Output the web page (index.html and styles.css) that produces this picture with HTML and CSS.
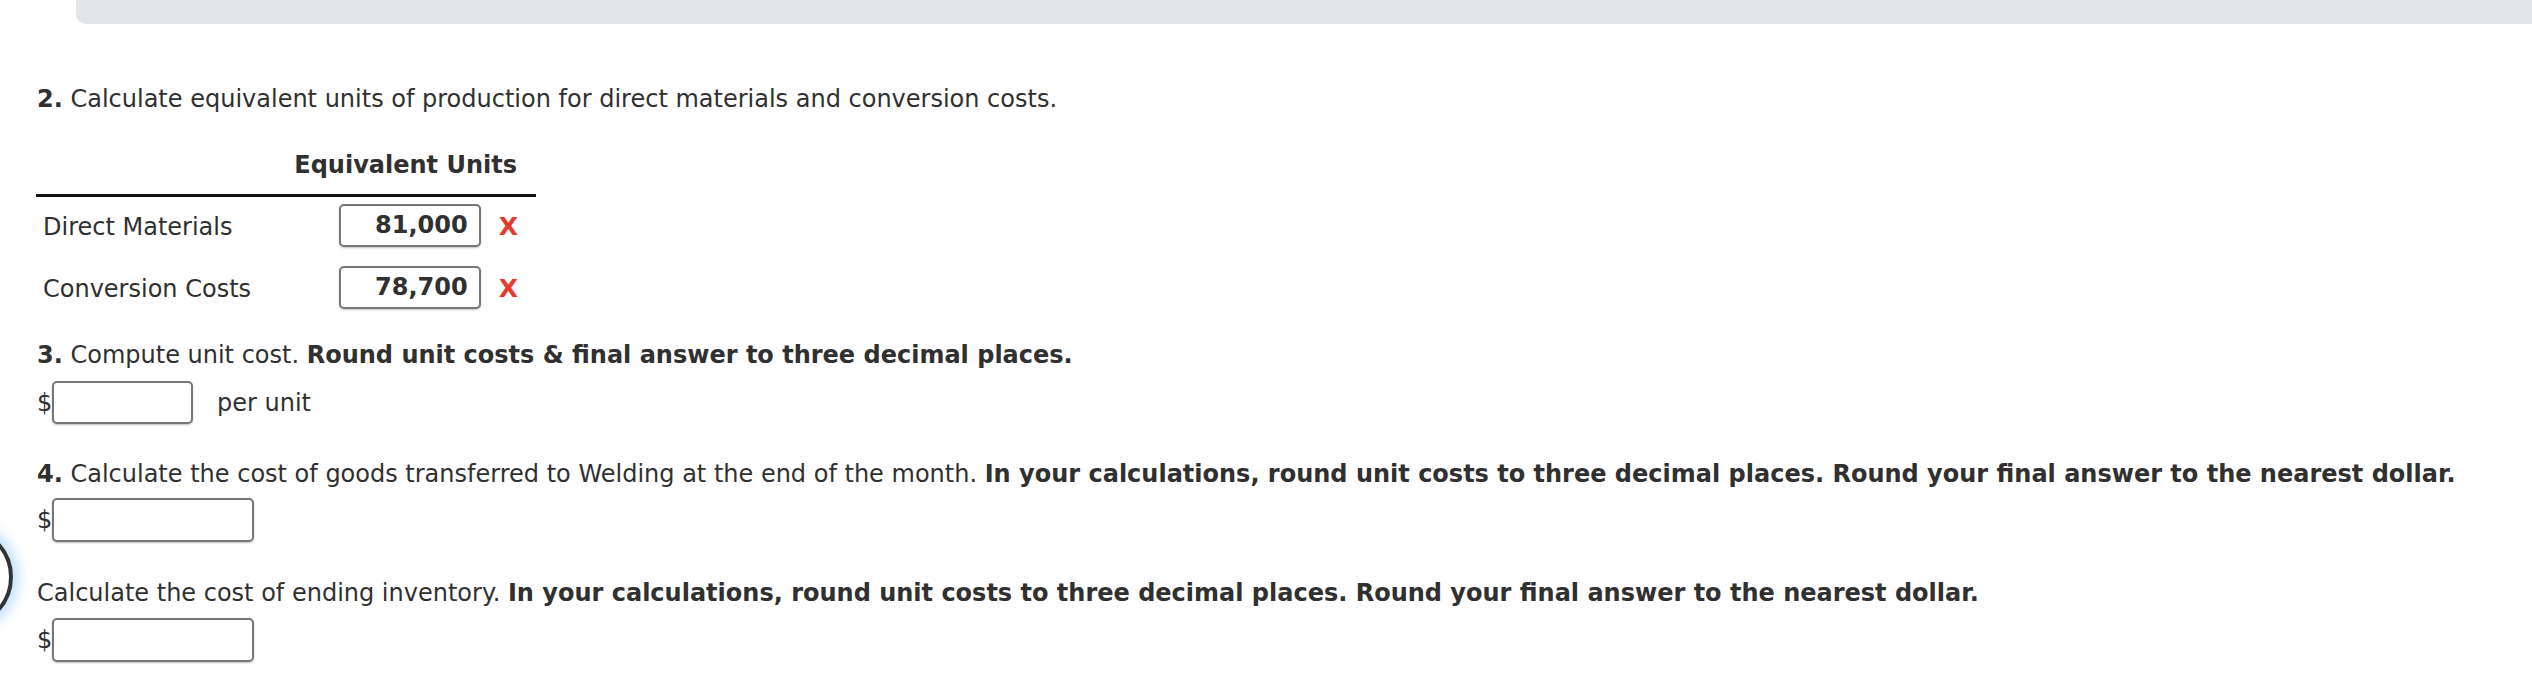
FILE: index.html
```html
<!DOCTYPE html>
<html lang="en">
<head>
<meta charset="utf-8">
<title>Equivalent units</title>
<link rel="stylesheet" href="styles.css">
</head>
<body>
<div class="topbar"></div>
<div class="focus-ring"></div>
<main class="content">
  <p class="q q2"><b>2.</b> Calculate equivalent units of production for direct materials and conversion costs.</p>
  <div class="eu-table">
    <div class="eu-head">
      <span class="eu-head-cell">Equivalent Units</span>
    </div>
    <div class="eu-row">
      <span class="eu-label">Direct Materials</span>
      <span class="eu-cell"><span class="field field-num">81,000</span><span class="wrong">X</span></span>
    </div>
    <div class="eu-row">
      <span class="eu-label">Conversion Costs</span>
      <span class="eu-cell"><span class="field field-num">78,700</span><span class="wrong">X</span></span>
    </div>
  </div>

  <p class="q q3"><b>3.</b> Compute unit cost. <b>Round unit costs &amp; final answer to three decimal places.</b></p>
  <div class="answer a3"><span class="cur">$</span><span class="field field-sm"></span><span class="unit">per unit</span></div>

  <p class="q q4"><b>4.</b> Calculate the cost of goods transferred to Welding at the end of the month. <b>In your calculations, round unit costs to three decimal places. Round your final answer to the nearest dollar.</b></p>
  <div class="answer a4"><span class="cur">$</span><span class="field field-lg"></span></div>

  <p class="q q5">Calculate the cost of ending inventory. <b>In your calculations, round unit costs to three decimal places. Round your final answer to the nearest dollar.</b></p>
  <div class="answer a5"><span class="cur">$</span><span class="field field-lg"></span></div>
</main>
</body>
</html>
```
FILE: styles.css
```css
html, body {
  margin: 0;
  padding: 0;
  background: #ffffff;
}
body {
  font-family: "DejaVu Sans", Verdana, sans-serif;
  font-size: 24px;
  line-height: 28px;
  color: #303030;
  overflow: hidden;
  position: relative;
  height: 692px;
}
b { font-weight: bold; }

.topbar {
  margin-left: 76px;
  height: 24px;
  background: #e1e6e9;
  border-bottom-left-radius: 10px;
}

.focus-ring {
  position: absolute;
  left: -89px;
  top: 526px;
  width: 94px;
  height: 94px;
  border: 4px solid #333;
  border-radius: 50%;
  box-shadow: 0 0 12px 6px rgba(120, 190, 255, 0.45);
}

.content {
  padding-left: 37px;
}

.q {
  margin: 0;
  white-space: nowrap;
}
.q2 { margin-top: 61px; }

.eu-table {
  width: 500px;
  margin-left: -1px;
}
.eu-head {
  display: flex;
  justify-content: flex-end;
  padding-top: 38px;
  padding-bottom: 15px;
  border-bottom: 3px solid #111;
}
.eu-head-cell {
  font-weight: bold;
  padding-right: 19px;
}
.eu-row {
  display: flex;
  align-items: center;
  justify-content: space-between;
  padding: 7px 0 12px;
}
.eu-label {
  padding-left: 7px;
  padding-top: 3px;
}
.eu-cell {
  display: flex;
  align-items: center;
  gap: 18px;
  padding-right: 18px;
}

.field {
  display: inline-block;
  box-sizing: border-box;
  height: 43px;
  border: 2px solid #777;
  border-radius: 5px;
  background: #fff;
  box-shadow: 0 1px 2px rgba(0, 0, 0, 0.25);
}
.field-num {
  width: 142px;
  text-align: right;
  font-weight: bold;
  padding-right: 11px;
  line-height: 39px;
}
.field-sm { width: 141px; }
.field-lg { width: 202px; height: 44px; }

.wrong {
  color: #e8392e;
  font-weight: bold;
  font-size: 25px;
  padding-top: 2px;
}

.q3 { margin-top: 20px; }
.answer {
  display: flex;
  align-items: center;
}
.cur {
  width: 15px;
}
.a3 { margin-top: 12px; }
.unit { margin-left: 24px; }
.q4 { margin-top: 36px; }
.a4 { margin-top: 10px; }
.q5 { margin-top: 37px; }
.a5 { margin-top: 11px; }
```
